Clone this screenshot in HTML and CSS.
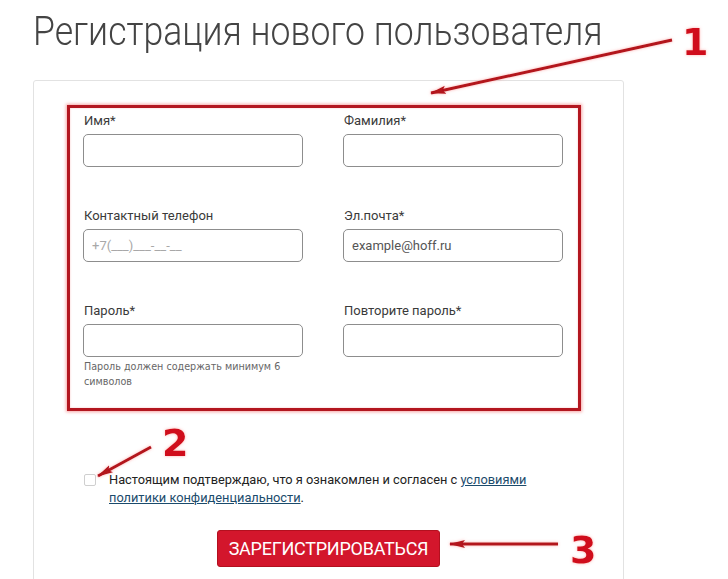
FILE: index.html
```html
<!DOCTYPE html>
<html lang="ru">
<head>
<meta charset="utf-8">
<title>Регистрация нового пользователя</title>
<link rel="stylesheet" href="styles.css">
</head>
<body>
<main class="page">
  <h1 class="title"><span class="title-text">Регистрация нового пользователя</span></h1>
  <section class="card">
    <div class="highlight">
      <div class="fields">
        <div class="field">
          <label class="label">Имя*</label>
          <input class="input" type="text">
        </div>
        <div class="field">
          <label class="label">Фамилия*</label>
          <input class="input" type="text">
        </div>
        <div class="field">
          <label class="label">Контактный телефон</label>
          <input class="input input-phone" type="text" placeholder="+7(___)___-__-__">
        </div>
        <div class="field">
          <label class="label">Эл.почта*</label>
          <input class="input input-email" type="text" placeholder="example@hoff.ru">
        </div>
        <div class="field">
          <label class="label">Пароль*</label>
          <input class="input" type="password">
          <p class="hint">Пароль должен содержать минимум 6 символов</p>
        </div>
        <div class="field">
          <label class="label">Повторите пароль*</label>
          <input class="input" type="password">
        </div>
      </div>
    </div>
    <div class="agree">
      <span class="checkbox"></span>
      <p class="agree-text">Настоящим подтверждаю, что я ознакомлен и согласен с <a class="link" href="#">условиями политики конфиденциальности</a>.</p>
    </div>
    <div class="actions">
      <button class="submit" type="button">ЗАРЕГИСТРИРОВАТЬСЯ</button>
    </div>
  </section>
</main>
<svg class="annotations" width="728" height="579" viewBox="0 0 728 579">
  <defs>
    <marker id="head" markerUnits="userSpaceOnUse" markerWidth="16" markerHeight="10" refX="15" refY="5" orient="auto">
      <path d="M0,1 L16,5 L0,9 L3,5 Z" fill="#b3121c"/>
    </marker>
    <filter id="glow" x="-20%" y="-50%" width="140%" height="200%">
      <feGaussianBlur in="SourceAlpha" stdDeviation="1.5" result="b"/>
      <feFlood flood-color="#ff6b6b" flood-opacity="0.55"/>
      <feComposite in2="b" operator="in" result="g"/>
      <feMerge><feMergeNode in="g"/><feMergeNode in="SourceGraphic"/></feMerge>
    </filter>
  </defs>
  <g filter="url(#glow)">
    <line x1="672" y1="40" x2="431" y2="93" stroke="#b3121c" stroke-width="3" marker-end="url(#head)"/>
    <line x1="151" y1="447" x2="98" y2="476" stroke="#b3121c" stroke-width="3" marker-end="url(#head)"/>
    <line x1="558" y1="544" x2="450" y2="544" stroke="#b3121c" stroke-width="3" marker-end="url(#head)"/>
    <text class="num" x="682" y="55">1</text>
    <text class="num" x="162" y="456">2</text>
    <text class="num" x="570" y="563">3</text>
  </g>
</svg>
</body>
</html>
```
FILE: styles.css
```css
html, body {
  margin: 0;
  padding: 0;
  background: #ffffff;
  width: 728px;
  height: 579px;
  overflow: hidden;
}
body {
  position: relative;
  font-family: Roboto, "Liberation Sans", Arial, sans-serif;
  color: #333333;
}
.page {
  padding-top: 8px;
}
.title {
  margin: 0;
  padding-left: 33px;
  font-family: Roboto, "Liberation Sans", sans-serif;
  font-weight: 300;
  font-size: 40px;
  line-height: 48px;
  color: #444444;
  white-space: nowrap;
}
.title-text {
  display: inline-block;
  transform: scaleX(0.89);
  transform-origin: left center;
}
.card {
  margin: 24px 0 0 33px;
  width: 589px;
  border: 1px solid #e2e2e2;
  border-radius: 3px;
  padding: 24px 0 60px 0;
}
.highlight {
  margin-left: 33px;
  width: 480px;
  border: 3px solid #b3161f;
  box-shadow: 0 0 3px 1px rgba(240, 90, 90, 0.55), inset 0 0 2px rgba(240, 90, 90, 0.4);
  padding: 5px 15px 19px 13px;
}
.fields {
  display: grid;
  grid-template-columns: 220px 220px;
  column-gap: 40px;
  row-gap: 41px;
  align-items: start;
}
.field {
  display: flex;
  flex-direction: column;
}
.label {
  display: block;
  font-size: 13px;
  line-height: 16px;
  color: #3a3a3a;
  margin: 0 0 5px 1px;
}
.input {
  box-sizing: border-box;
  width: 220px;
  height: 33px;
  margin: 0;
  border: 1px solid #8d8d8d;
  border-radius: 5px;
  padding: 0 8px;
  font-family: Roboto, "Liberation Sans", sans-serif;
  font-size: 13px;
  background: #ffffff;
  outline: none;
}
.input::placeholder {
  color: #a8a8a8;
}
.input-email::placeholder {
  color: #555555;
}
.hint {
  margin: 2px 0 0 1px;
  font-family: "DejaVu Sans", Verdana, sans-serif;
  font-size: 9.6px;
  line-height: 15px;
  color: #666666;
}
.agree {
  display: flex;
  align-items: flex-start;
  margin: 60px 0 0 50px;
}
.checkbox {
  flex: none;
  box-sizing: border-box;
  width: 12px;
  height: 12px;
  margin-top: 3px;
  border: 1px solid #cfcfcf;
  border-radius: 2px;
  background: #ffffff;
}
.agree-text {
  margin: 0 0 0 13px;
  width: 430px;
  font-size: 12.8px;
  line-height: 18px;
  color: #222222;
}
.link {
  color: #1b4b6c;
  text-decoration: underline;
}
.actions {
  display: flex;
  justify-content: center;
  margin-top: 23px;
}
.submit {
  width: 223px;
  height: 37px;
  border: 1px solid #b3101f;
  border-radius: 3px;
  background: #d3162c;
  color: #ffffff;
  font-family: Roboto, "Liberation Sans", sans-serif;
  font-size: 18px;
  letter-spacing: -0.25px;
  padding: 0;
  cursor: pointer;
}
.annotations {
  position: absolute;
  left: 0;
  top: 0;
  pointer-events: none;
}
.num {
  font-family: "DejaVu Sans", sans-serif;
  font-weight: bold;
  font-size: 38px;
  fill: #d0111b;
}
```
